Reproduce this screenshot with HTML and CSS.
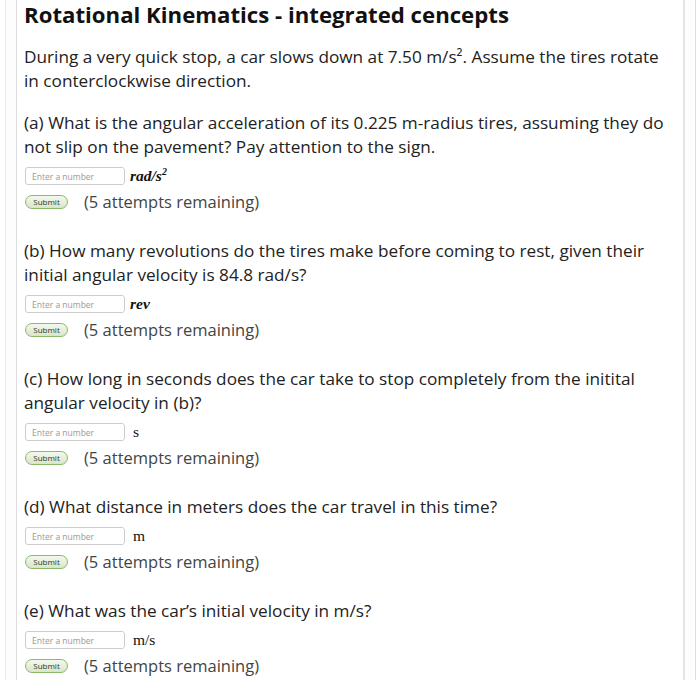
FILE: index.html
```html
<!DOCTYPE html>
<html>
<head>
<meta charset="utf-8">
<link rel="stylesheet" href="styles.css">
</head>
<body>
<div class="page">
  <div class="panel">
    <h1 class="title">Rotational Kinematics - integrated cencepts</h1>
    <p class="intro">During a very quick stop, a car slows down at 7.50 m/s². Assume the tires rotate in conterclockwise direction.</p>

    <div class="part">
      <p class="question">(a) What is the angular acceleration of its 0.225 m-radius tires, assuming they do not slip on the pavement? Pay attention to the sign.</p>
      <div class="answer">
        <input class="num" type="text" placeholder="Enter a number">
        <span class="unit unit-it">rad/s<sup>2</sup></span>
      </div>
      <div class="submit-row">
        <button class="submit">Submit</button>
        <span class="attempts">(5 attempts remaining)</span>
      </div>
    </div>

    <div class="part">
      <p class="question">(b) How many revolutions do the tires make before coming to rest, given their initial angular velocity is 84.8 rad/s?</p>
      <div class="answer">
        <input class="num" type="text" placeholder="Enter a number">
        <span class="unit unit-it">rev</span>
      </div>
      <div class="submit-row">
        <button class="submit">Submit</button>
        <span class="attempts">(5 attempts remaining)</span>
      </div>
    </div>

    <div class="part">
      <p class="question">(c) How long in seconds does the car take to stop completely from the initital angular velocity in (b)?</p>
      <div class="answer">
        <input class="num" type="text" placeholder="Enter a number">
        <span class="unit unit-rm">s</span>
      </div>
      <div class="submit-row">
        <button class="submit">Submit</button>
        <span class="attempts">(5 attempts remaining)</span>
      </div>
    </div>

    <div class="part">
      <p class="question">(d) What distance in meters does the car travel in this time?</p>
      <div class="answer">
        <input class="num" type="text" placeholder="Enter a number">
        <span class="unit unit-rm">m</span>
      </div>
      <div class="submit-row">
        <button class="submit">Submit</button>
        <span class="attempts">(5 attempts remaining)</span>
      </div>
    </div>

    <div class="part">
      <p class="question">(e) What was the car’s initial velocity in m/s?</p>
      <div class="answer">
        <input class="num" type="text" placeholder="Enter a number">
        <span class="unit unit-rm">m/s</span>
      </div>
      <div class="submit-row">
        <button class="submit">Submit</button>
        <span class="attempts">(5 attempts remaining)</span>
      </div>
    </div>
  </div>
</div>
</body>
</html>
```

FILE: styles.css
```css
html, body {
  margin: 0;
  padding: 0;
  background: #ffffff;
}

body {
  font-family: "Open Sans", "DejaVu Sans", sans-serif;
  color: #222;
}

.page {
  margin-left: 5px;
  width: 669px;
  min-height: 680px;
  border-left: 1px solid #ececec;
  border-right: 1px solid #dedede;
  padding: 0 10px;
  background: #fdfdfd;
}

.panel {
  min-height: 680px;
  border-left: 1px solid #dcdcdc;
  border-right: 2px solid #e4e4e4;
  padding: 0 11px 0 7px;
  background: #fff;
}

.title {
  margin: 0;
  padding-top: 1px;
  font-size: 22.2px;
  font-weight: 700;
  line-height: 27px;
  color: #111;
}

.intro {
  margin: 17px 0 18px;
  font-size: 17.2px;
  line-height: 24px;
}

.part {
  margin-bottom: 26px;
}

.question {
  margin: 0;
  font-size: 17.2px;
  line-height: 24px;
}

.answer {
  display: flex;
  align-items: center;
  margin-top: 8px;
  height: 18px;
}

.num {
  box-sizing: border-box;
  width: 100px;
  height: 18px;
  margin: 0 0 0 1px;
  padding: 0 6px;
  border: 1px solid #cdcdcd;
  border-radius: 3px;
  font-family: "Open Sans", sans-serif;
  font-size: 8.5px;
  background: #fff;
}

.num::placeholder {
  color: #9a9a9a;
}

.unit {
  font-family: "Liberation Serif", "Times New Roman", serif;
  font-size: 15.5px;
  color: #111;
}

.unit-it {
  margin-left: 5px;
  font-style: italic;
  font-weight: 700;
}

.unit-it sup {
  font-size: 10px;
  vertical-align: 6px;
  line-height: 0;
}

.unit-rm {
  margin-left: 8px;
}

.submit-row {
  display: flex;
  align-items: center;
  gap: 16px;
  margin-top: 6px;
  height: 22px;
}

.submit {
  box-sizing: border-box;
  width: 43px;
  height: 14px;
  margin-left: 1px;
  padding: 0;
  border: 1px solid #8cb86a;
  border-radius: 8px;
  background: linear-gradient(#f4f8ee, #d7e6c6);
  font-family: "Open Sans", sans-serif;
  font-size: 8px;
  line-height: 12px;
  color: #333;
}

.attempts {
  font-size: 16.5px;
  line-height: 22px;
  color: #444;
}
```
